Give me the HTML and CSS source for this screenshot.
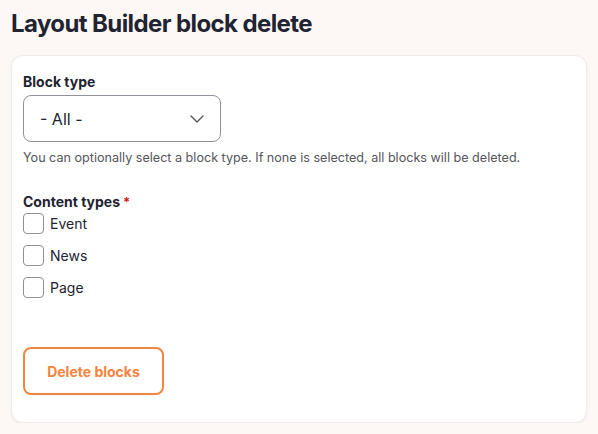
FILE: index.html
```html
<!DOCTYPE html>
<html lang="en">
<head>
<meta charset="utf-8">
<title>Layout Builder block delete</title>
<link rel="stylesheet" href="styles.css">
</head>
<body>
<main class="page">
  <h1 class="page-title">Layout Builder block delete</h1>
  <form class="card">
    <div class="field">
      <label class="label" for="block-type">Block type</label>
      <div class="select">
        <span class="select-value">- All -</span>
        <svg class="chevron" width="14" height="8" viewBox="0 0 14 8" aria-hidden="true"><path d="M1 1l6 6 6-6" fill="none" stroke="#55565b" stroke-width="1.4" stroke-linecap="round" stroke-linejoin="round"/></svg>
      </div>
      <p class="description">You can optionally select a block type. If none is selected, all blocks will be deleted.</p>
    </div>
    <div class="field field-checkboxes">
      <div class="label">Content types<span class="required">*</span></div>
      <label class="checkbox"><span class="box"></span>Event</label>
      <label class="checkbox"><span class="box"></span>News</label>
      <label class="checkbox"><span class="box"></span>Page</label>
    </div>
    <div class="actions">
      <button type="button" class="button">Delete blocks</button>
    </div>
  </form>
</main>
</body>
</html>
```
FILE: styles.css
```css
html, body {
  margin: 0;
  padding: 0;
  background: #fdf8f5;
  font-family: Inter, "Noto Sans", sans-serif;
  color: #222330;
}
.page {
  padding: 8px 11px 0 11px;
}
.page-title {
  margin: 0;
  font-size: 24px;
  line-height: 32px;
  font-weight: 700;
  letter-spacing: -0.6px;
  color: #222330;
}
.card {
  margin-top: 15px;
  background: #fff;
  border: 1px solid #efebe8;
  border-radius: 12px;
  box-shadow: 0 1px 3px rgba(0,0,0,0.06);
  padding: 17px 12px 27px 11px;
  height: 368px;
  box-sizing: border-box;
  display: flex;
  flex-direction: column;
}
.label {
  display: block;
  font-size: 14px;
  font-weight: 700;
  line-height: 18px;
  color: #222330;
  margin-bottom: 4px;
}
.select {
  width: 198px;
  height: 47px;
  box-sizing: border-box;
  border: 1px solid #8e929c;
  border-radius: 8px;
  display: flex;
  align-items: center;
  justify-content: space-between;
  padding: 0 16px 0 16px;
}
.select-value {
  font-size: 16px;
  color: #222330;
}
.description {
  margin: 7px 0 0 0;
  font-size: 12.6px;
  line-height: 18px;
  color: #55565b;
}
.field-checkboxes {
  margin-top: 26px;
}
.field-checkboxes .label {
  margin-bottom: 1px;
}
.required {
  color: #d72222;
  font-size: 13px;
  vertical-align: top;
  margin-left: 3px;
}
.checkbox {
  display: flex;
  align-items: center;
  gap: 6px;
  font-size: 14px;
  color: #222330;
  height: 22px;
  margin-bottom: 10px;
}
.box {
  width: 21px;
  height: 21px;
  box-sizing: border-box;
  border: 1px solid #8e929c;
  border-radius: 4px;
  background: #fff;
}
.actions {
  margin-top: auto;
}
.button {
  width: 141px;
  height: 48px;
  border: 2px solid #f5843e;
  border-radius: 8px;
  background: #fff;
  color: #f5843e;
  font-family: Inter, "Noto Sans", sans-serif;
  font-size: 14px;
  font-weight: 700;
  cursor: pointer;
}
```
